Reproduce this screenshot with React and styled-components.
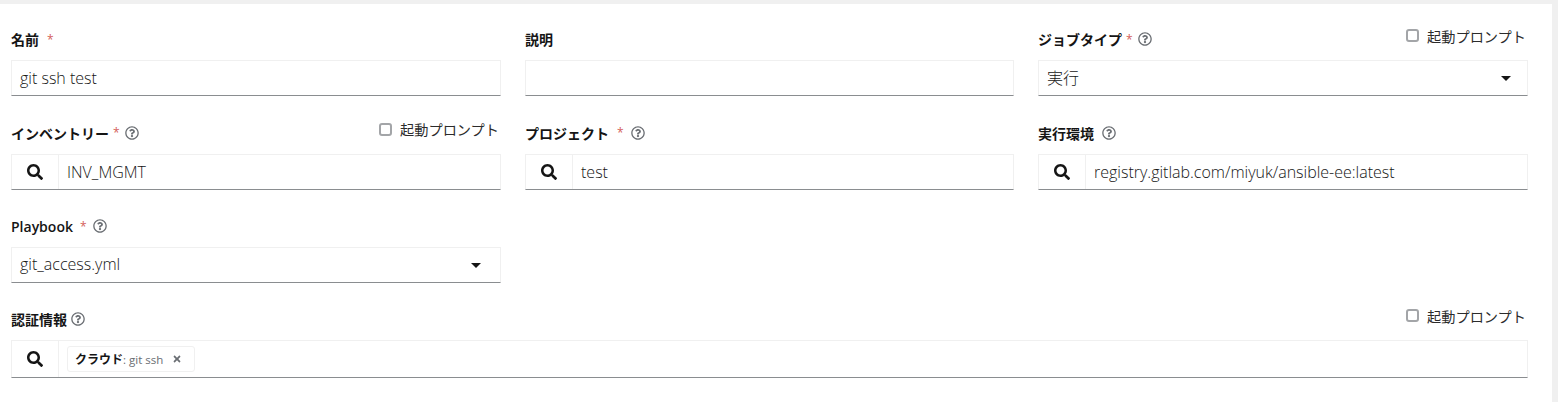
import React from "react";
import styled, { createGlobalStyle } from "styled-components";
import { FaSearch, FaTimes, FaRegQuestionCircle } from "react-icons/fa";

const GlobalStyle = createGlobalStyle`
  html, body {
    margin: 0;
    padding: 0;
    background: #f0f0f0;
  }
  body {
    font-family: "Open Sans", "Noto Sans CJK JP", sans-serif;
    color: #151515;
  }
`;

const Page = styled.div`
  height: 402px;
  padding: 4px 6px 0 0;
  box-sizing: border-box;
`;

const Card = styled.form`
  background: #fff;
  height: 398px;
  padding: 24.4px 24px 0 11px;
  box-sizing: border-box;
  width: 1552px;
`;

const Grid = styled.div`
  display: grid;
  grid-template-columns: 490px 489px 490px;
  column-gap: 24px;
  row-gap: 25.33px;
`;

const Group = styled.div`
  min-width: 0;
  grid-column: ${(p) => (p.$full ? "1 / -1" : "auto")};
`;

const LabelRow = styled.div`
  display: flex;
  justify-content: space-between;
  align-items: flex-start;
  height: 32px;
`;

const Label = styled.label`
  display: flex;
  align-items: center;
  height: 22px;
  font-size: 14px;
  font-weight: 600;
`;

const Star = styled.span`
  color: #d4605a;
  font-size: 12px;
  font-weight: 400;
  margin-left: ${(p) => p.$gap || 8}px;
`;

const Help = styled(FaRegQuestionCircle)`
  width: 14px;
  height: 14px;
  color: #6a6e73;
  margin-left: ${(p) => p.$gap || 7}px;
`;

const Prompt = styled.label`
  display: flex;
  align-items: center;
  gap: 8px;
  height: 15px;
  font-size: 14.2px;
  color: #2b2b2b;
  margin-right: 2px;
`;

const Box = styled.span`
  width: 9px;
  height: 9px;
  flex-shrink: 0;
  border: 2px solid #a3a5a8;
  border-radius: 3px;
  background: #fff;
`;

const Field = styled.div`
  display: flex;
  align-items: center;
  height: ${(p) => p.$height || 36}px;
  box-sizing: border-box;
  border: 1px solid #f0f0f0;
  border-bottom: 1px solid #8a8d90;
  background: #fff;
  font-size: 16px;
  font-weight: 300;
  color: #151515;
`;

const SearchCell = styled.div`
  width: 46px;
  height: 100%;
  display: flex;
  align-items: center;
  justify-content: center;
  border-right: 1px solid #f0f0f0;
  flex-shrink: 0;
  color: #151515;
  font-size: 16px;
`;

const Value = styled.span`
  padding-left: 8px;
  padding-bottom: ${(p) => p.$lift || 0}px;
  flex: 1;
`;

const Caret = styled.span`
  width: 0;
  height: 0;
  margin-right: ${(p) => p.$right || 16}px;
  border-left: 5px solid transparent;
  border-right: 5px solid transparent;
  border-top: 5px solid #151515;
`;

const Chips = styled.div`
  padding-left: 8px;
  display: flex;
  align-items: center;
`;

const Chip = styled.div`
  display: flex;
  align-items: center;
  height: 26px;
  box-sizing: border-box;
  padding: 0 12px 0 7px;
  border: 1px solid #f0f0f0;
  border-radius: 3px;
  font-size: 12px;
  font-weight: 400;
`;

const ChipKey = styled.span`
  font-weight: 600;
  color: #151515;
`;

const ChipValue = styled.span`
  color: #6a6e73;
  font-size: 11.5px;
`;

const ChipClose = styled(FaTimes)`
  width: 10px;
  height: 10px;
  margin-left: 9px;
  color: #6a6e73;
`;

function PromptCheck() {
  return (
    <Prompt>
      <Box />
      起動プロンプト
    </Prompt>
  );
}

function SearchField({ value, height, children }) {
  return (
    <Field $height={height}>
      <SearchCell>
        <FaSearch />
      </SearchCell>
      {children || <Value>{value}</Value>}
    </Field>
  );
}

export default function App() {
  return (
    <Page>
      <GlobalStyle />
      <Card>
        <Grid>
          <Group>
            <LabelRow>
              <Label>
                名前<Star>*</Star>
              </Label>
            </LabelRow>
            <Field>
              <Value>git ssh test</Value>
            </Field>
          </Group>
          <Group>
            <LabelRow>
              <Label>説明</Label>
            </LabelRow>
            <Field />
          </Group>
          <Group>
            <LabelRow>
              <Label>
                ジョブタイプ<Star $gap={4}>*</Star>
                <Help $gap={5} />
              </Label>
              <PromptCheck />
            </LabelRow>
            <Field>
              <Value $lift={2}>実行</Value>
              <Caret />
            </Field>
          </Group>
          <Group>
            <LabelRow>
              <Label>
                インベントリー<Star $gap={4}>*</Star>
                <Help $gap={5} />
              </Label>
              <PromptCheck />
            </LabelRow>
            <SearchField value="INV_MGMT" />
          </Group>
          <Group>
            <LabelRow>
              <Label>
                プロジェクト<Star>*</Star>
                <Help />
              </Label>
            </LabelRow>
            <SearchField value="test" />
          </Group>
          <Group>
            <LabelRow>
              <Label>
                実行環境
                <Help $gap={8} />
              </Label>
            </LabelRow>
            <SearchField value="registry.gitlab.com/miyuk/ansible-ee:latest" />
          </Group>
          <Group>
            <LabelRow>
              <Label>
                Playbook<Star $gap={7}>*</Star>
                <Help $gap={6} />
              </Label>
            </LabelRow>
            <Field>
              <Value $lift={2}>git_access.yml</Value>
              <Caret $right={19} />
            </Field>
          </Group>
          <Group $full>
            <LabelRow>
              <Label>
                認証情報
                <Help $gap={4} />
              </Label>
              <PromptCheck />
            </LabelRow>
            <SearchField height={38}>
              <Chips>
                <Chip>
                  <ChipKey>クラウド</ChipKey>
                  <ChipValue>: git ssh</ChipValue>
                  <ChipClose />
                </Chip>
              </Chips>
            </SearchField>
          </Group>
        </Grid>
      </Card>
    </Page>
  );
}
